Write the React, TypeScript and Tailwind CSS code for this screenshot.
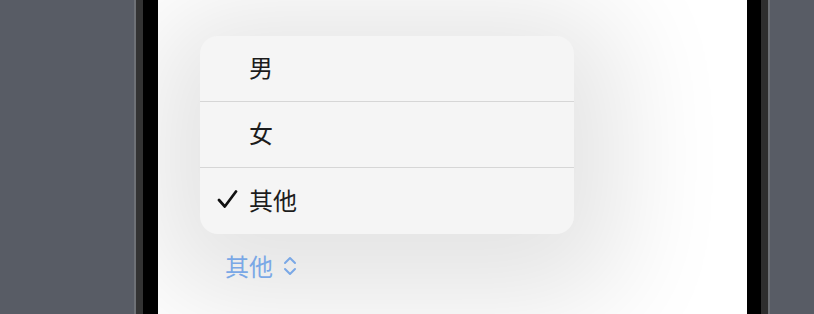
export default function App() {
  const options = ['男', '女', '其他'];
  const selected = '其他';

  return (
    <div
      className="flex h-screen w-full overflow-hidden bg-[#585c65]"
      style={{ fontFamily: '"Noto Sans CJK SC", "Noto Sans", sans-serif' }}
    >
      <div className="w-[134px] shrink-0 bg-[#585c65]" />
      <div className="w-[2px] shrink-0 bg-[#6e7176]" />
      <div className="w-[7px] shrink-0 bg-[#333333]" />
      <div className="w-[15px] shrink-0 bg-black" />

      <div className="relative flex-1 overflow-hidden bg-white">
        <div className="px-[42px] pt-[36px]">
          <div className="w-[374px] overflow-hidden rounded-[18px] bg-[#f5f5f5] shadow-[0_20px_110px_45px_rgba(0,0,0,0.11)]">
            {options.map((opt, i) => (
              <div
                key={opt}
                className={`flex h-[66px] items-center pb-[3px] ${i < options.length - 1 ? 'border-b border-[#d6d6d6]' : ''}`}
              >
                <div className="flex w-[49px] justify-center pl-[6px]">
                  {opt === selected && (
                    <svg width="21" height="19" viewBox="0 0 21 19" fill="none">
                      <path
                        d="M2 10 L7.8 16.5 L19 1.5"
                        stroke="#111"
                        strokeWidth="2.7"
                        strokeLinecap="round"
                        strokeLinejoin="round"
                      />
                    </svg>
                  )}
                </div>
                <span className="text-[24px] leading-none text-[#1c1c1c]">{opt}</span>
              </div>
            ))}
          </div>

          <div className="mt-[20px] flex items-center pl-[25px] text-[#7aa8e6]">
            <span className="text-[24px] leading-none">{selected}</span>
            <svg className="ml-[10px]" width="14" height="20" viewBox="0 0 14 20" fill="none">
              <path d="M2 7 L7 2 L12 7" stroke="#7aa8e6" strokeWidth="2" strokeLinecap="round" strokeLinejoin="round" />
              <path d="M2 13 L7 18 L12 13" stroke="#7aa8e6" strokeWidth="2" strokeLinecap="round" strokeLinejoin="round" />
            </svg>
          </div>
        </div>
      </div>

      <div className="w-[14px] shrink-0 bg-black" />
      <div className="w-[7px] shrink-0 bg-[#2e2e2e]" />
      <div className="w-[2px] shrink-0 bg-[#6e7176]" />
      <div className="w-[44px] shrink-0 bg-[#585c65]" />
    </div>
  );
}
